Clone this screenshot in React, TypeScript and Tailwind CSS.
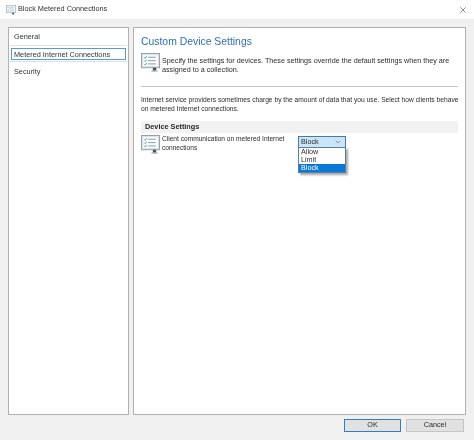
import React from 'react';
import { ChevronDown, X } from 'lucide-react';

const SettingsIcon = ({ className }: { className?: string }) => (
  <svg viewBox="0 0 20 20" className={className}>
    <rect x="0.5" y="0.5" width="19" height="15" fill="#e9eef3" stroke="#949ca4" />
    <rect x="2" y="2" width="16" height="12" fill="#fbfcfd" stroke="#c3ccd4" strokeWidth="0.5" />
    <path d="M3.5 4.5l1 1 1.5-2M3.5 8l1 1 1.5-2M3.5 11.5l1 1 1.5-2" fill="none" stroke="#2f9fb8" strokeWidth="1" />
    <path d="M7.5 4.5h8M7.5 8h8M7.5 11.5h8" stroke="#8a97a3" strokeWidth="1" />
    <rect x="12.5" y="15.5" width="3.5" height="3" fill="#4a4f55" />
    <rect x="11" y="18.5" width="6.5" height="1" fill="#8f979f" />
  </svg>
);

export default function App() {
  return (
    <div className="w-[474px] h-[440px] overflow-hidden flex flex-col bg-[#f0f0f0] text-[#2b2b2b] blur-[0.35px] font-['Liberation_Sans',sans-serif]">
      {/* title bar */}
      <div className="h-[19px] shrink-0 bg-white flex items-center pl-[6px] pr-[6px]">
        <SettingsIcon className="w-[10px] h-[10px] mr-[2px] shrink-0" />
        <span className="text-[7.3px] text-[#333333]">Block Metered Connections</span>
        <X size={10} strokeWidth={1.5} className="ml-auto text-[#555555]" />
      </div>

      <div className="flex-1 flex flex-col px-[8px] pt-[8px]">
        <div className="h-[388px] flex gap-[4px]">
          {/* left nav */}
          <div className="w-[121px] shrink-0 bg-white border border-[#b0b0b0] pt-[2px] px-[1px] text-[7.3px] leading-[11px] text-[#333333]">
            <div className="h-[16px] pl-[4px] pt-[1px] border-b border-[#d5e3f0]">General</div>
            <div className="h-[16px] pt-[2px] border-b border-[#d5e3f0]">
              <div className="h-[12px] mx-[1px] pl-[2px] border border-[#5a9bd5] whitespace-nowrap flex items-center">
                Metered Internet Connections
              </div>
            </div>
            <div className="pl-[4px] pt-[4px]">Security</div>
          </div>

          {/* right panel */}
          <div className="flex-1 min-w-0 bg-white border border-[#b0b0b0] pl-[7px] pr-[7px] pt-[7px] text-[7px]">
            <h1 className="text-[10.4px] leading-[14px] text-[#2f6fb5]">Custom Device Settings</h1>

            <div className="flex items-start mt-[4px]">
              <SettingsIcon className="w-[19px] h-[19px] shrink-0" />
              <p className="ml-[2px] mt-[3px] w-[296px] text-[7.2px] leading-[9px]">
                Specify the settings for devices. These settings override the default settings when they are assigned to a collection.
              </p>
            </div>

            <div className="h-px bg-[#c8c8c8] mt-[12px]" />

            <p className="mt-[9px] w-[320px] text-[6.7px] leading-[8.5px]">
              Internet service providers sometimes charge by the amount of data that you use. Select how clients behave on metered Internet connections.
            </p>

            <div className="mt-[8px] h-[12px] bg-[#f2f2f2] flex items-center pl-[4px] font-bold text-[7.3px]">
              Device Settings
            </div>

            <div className="flex items-start mt-[2px]">
              <SettingsIcon className="w-[19px] h-[19px] shrink-0" />
              <p className="ml-[2px] w-[124px] text-[6.6px] leading-[8.5px]">
                Client communication on metered Internet connections
              </p>

              <div className="relative ml-[12px] mt-[1px] w-[48px] h-[12px] bg-[#cce4f7] border border-[#3f7cb5] flex items-center pl-[2px] text-[7.2px]">
                Block
                <ChevronDown size={8} strokeWidth={1.5} className="absolute right-[3px] top-[1px] text-[#444444]" />
                {/* open dropdown list */}
                <div className="absolute left-[-1px] top-[10px] w-[48px] bg-white border border-[#5a7fa5] shadow-[2px_2px_2px_rgba(0,0,0,0.35)] leading-[8px]">
                  <div className="pl-[2px]">Allow</div>
                  <div className="pl-[2px]">Limit</div>
                  <div className="pl-[2px] bg-[#0a78d7] text-white">Block</div>
                </div>
              </div>
            </div>
          </div>
        </div>

        {/* footer buttons */}
        <div className="flex justify-end gap-[5px] mt-[4px] pr-[2px] text-[7.2px]">
          <button className="w-[57px] h-[13px] bg-[#e1e1e1] border border-[#2f7fc7] flex items-center justify-center">OK</button>
          <button className="w-[58px] h-[13px] bg-[#e1e1e1] border border-[#c4c4c4] flex items-center justify-center">Cancel</button>
        </div>
      </div>
    </div>
  );
}
